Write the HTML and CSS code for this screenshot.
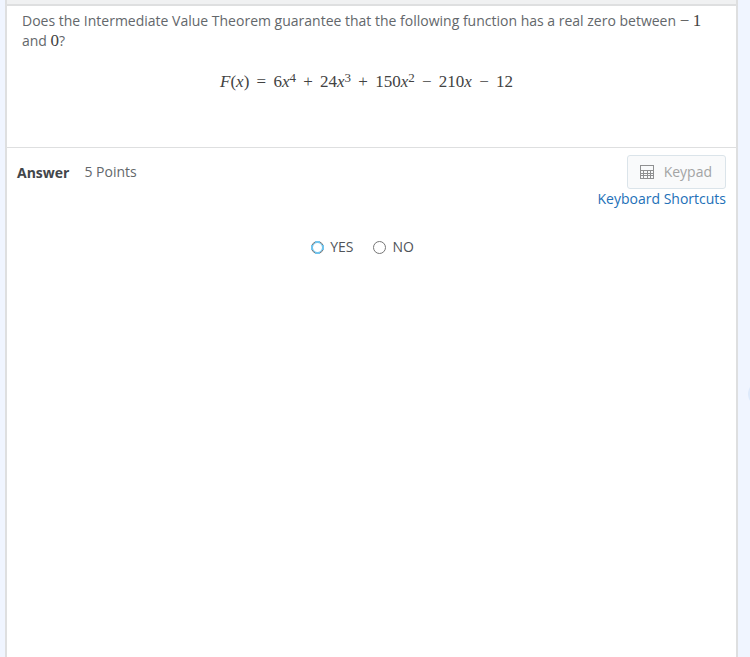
FILE: index.html
```
<!DOCTYPE html>
<html lang="en">
<head>
  <meta charset="UTF-8">
  <meta name="viewport" content="width=device-width, initial-scale=1.0">
  <title>Question</title>
  <link rel="stylesheet" href="styles.css">
</head>
<body>
  <main class="panel">
    <div class="panel-bar"></div>

    <section class="question">
      <p class="prompt">Does the Intermediate Value Theorem guarantee that the following function has a real zero between <span class="math">−&thinsp;1</span> and <span class="math">0</span>?</p>
      <p class="formula"><i>F</i>(<i>x</i>) <span class="op">=</span> 6<i>x</i><sup>4</sup> <span class="op">+</span> 24<i>x</i><sup>3</sup> <span class="op">+</span> 150<i>x</i><sup>2</sup> <span class="op">−</span> 210<i>x</i> <span class="op">−</span> 12</p>
    </section>

    <section class="answer">
      <div class="answer-header">
        <h2>Answer</h2>
        <span class="points">5 Points</span>
        <div class="tools">
          <button type="button" class="keypad" disabled>
            <svg width="14" height="14" viewBox="0 0 14 14" fill="currentColor" aria-hidden="true">
              <path fill-rule="evenodd" d="M0 0h14v14H0zM1 1v4h12V1zM1 6v2h2V6zM4 6v2h3V6zM8 6v2h2V6zM11 6v2h2V6zM1 9v1h2V9zM4 9v1h3V9zM8 9v1h2V9zM11 9v1h2V9zM1 11v2h2v-2zM4 11v2h3v-2zM8 11v2h2v-2zM11 11v2h2v-2z"/>
            </svg>
            Keypad
          </button>
          <a href="#">Keyboard Shortcuts</a>
        </div>
      </div>

      <form class="options">
        <label><input type="radio" name="answer" value="yes" class="focused">YES</label>
        <label><input type="radio" name="answer" value="no">NO</label>
      </form>
    </section>
  </main>
  <div class="side-handle"></div>
</body>
</html>
```

FILE: styles.css
```
:root {
  --page: #f0f5ff;
  --border: #dedfe0;
  --text: #63676b;
  --math: #424242;
  --link: #2370b8;
  --focus: #73c4ec;
}

* {
  box-sizing: border-box;
}

body {
  margin: 0;
  background-color: var(--page);
  color: var(--text);
  font-family: "Open Sans", sans-serif;
  font-size: 14px;
  line-height: 20px;
  overflow-x: hidden;
}

.panel {
  min-height: 100vh;
  margin: 0 12px 0 5px;
  background-color: #fff;
  border: solid var(--border);
  border-width: 0 2px;
}

.panel-bar {
  height: 6px;
  background-color: #f0f1f2;
  border-bottom: 2px solid var(--border);
}

.question {
  padding: 5px 15px 55px;
  border-bottom: 1px solid var(--border);
}

.prompt {
  margin: 0;
}

.math,
.formula {
  color: var(--math);
  font-family: "Liberation Serif", serif;
  font-size: 17px;
  line-height: 1;
}

.formula {
  margin: 20px 0 0;
  padding-right: 10px;
  line-height: 20px;
  text-align: center;
}

.formula .op {
  margin: 0 3px;
}

.formula sup {
  font-size: 13px;
  line-height: 1;
  vertical-align: 5px;
}

.answer {
  padding: 7px 10px;
}

.answer-header {
  display: flex;
  align-items: flex-start;
  gap: 15px;
}

.answer-header h2 {
  margin: 8px 0 0;
  color: #42464a;
  font-size: 14px;
  font-weight: 700;
}

.points {
  margin-top: 7px;
}

.tools {
  display: flex;
  flex-direction: column;
  align-items: flex-end;
  margin-left: auto;
}

.keypad {
  display: flex;
  align-items: center;
  gap: 10px;
  height: 34px;
  padding: 0 13px 0 12px;
  background-color: #f9fafb;
  border: 1px solid #dbe4ea;
  border-radius: 3px;
  color: #a3a4a5;
  font: inherit;
}

.keypad svg {
  color: #8f9091;
}

.tools a {
  color: var(--link);
  text-decoration: none;
}

.options {
  display: flex;
  justify-content: center;
  gap: 20px;
  margin-top: 28px;
  padding-right: 18px;
}

.options label {
  display: flex;
  align-items: center;
  gap: 6px;
  color: #505459;
}

.options input {
  appearance: none;
  position: relative;
  width: 13px;
  height: 13px;
  margin: 0;
  background-color: #fff;
  border: 1px solid #767676;
  border-radius: 50%;
}

.options .focused {
  box-shadow: inset 0 0 0 1px var(--focus);
}

/* flat blue sides over the circle, the grey shows at the corners */
.options .focused::before {
  content: "";
  position: absolute;
  inset: -1px;
  background:
    linear-gradient(var(--focus), var(--focus)) top / 5px 2px,
    linear-gradient(var(--focus), var(--focus)) bottom / 5px 2px,
    linear-gradient(var(--focus), var(--focus)) left / 2px 5px,
    linear-gradient(var(--focus), var(--focus)) right / 2px 5px;
  background-repeat: no-repeat;
}

/* round handle at the window's right edge */
.side-handle {
  position: fixed;
  top: 60%;
  right: -22px;
  width: 24px;
  height: 24px;
  margin-top: -12px;
  background-color: #deeafb;
  border-radius: 50%;
}
```
